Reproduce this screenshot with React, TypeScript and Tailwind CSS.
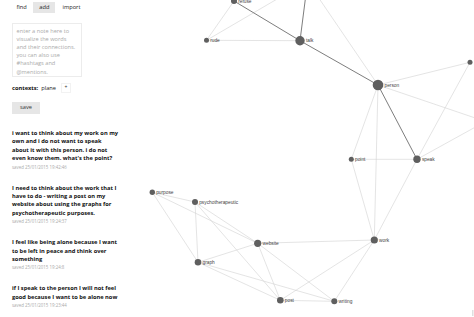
import React from "react";

type N = { id: string; x: number; y: number; r: number; label?: string };

const nodes: N[] = [
  { id: "refuse", x: 234, y: 1, r: 3, label: "refuse" },
  { id: "rude", x: 206.5, y: 40.3, r: 2.5, label: "rude" },
  { id: "talk", x: 300, y: 40.7, r: 4.7, label: "talk" },
  { id: "person", x: 378, y: 85, r: 5.3, label: "person" },
  { id: "n1", x: 470, y: 62.3, r: 2.5 },
  { id: "point", x: 351.3, y: 159.3, r: 2.5, label: "point" },
  { id: "speak", x: 417, y: 159.3, r: 3.7, label: "speak" },
  { id: "work", x: 374.3, y: 240, r: 3.6, label: "work" },
  { id: "website", x: 257.7, y: 243.3, r: 3.6, label: "website" },
  { id: "purpose", x: 152.3, y: 192.3, r: 2.7, label: "purpose" },
  { id: "psycho", x: 195, y: 202, r: 3, label: "psychotherapeutic" },
  { id: "graph", x: 198, y: 262.3, r: 3.3, label: "graph" },
  { id: "post", x: 280.3, y: 300.3, r: 3.3, label: "post" },
  { id: "writing", x: 334.3, y: 301.3, r: 3, label: "writing" },
];

const P: Record<string, [number, number]> = {};
nodes.forEach((n) => (P[n.id] = [n.x, n.y]));
P["offTalk"] = [306.5, -10];
P["offRude"] = [284, -5];
P["offPerson"] = [314, -9];
P["offPersonR"] = [490, 123];
P["offSpeak"] = [490, 119];

const dark: [string, string][] = [
  ["refuse", "talk"],
  ["talk", "offTalk"],
  ["talk", "person"],
  ["person", "speak"],
];

const light: [string, string][] = [
  ["refuse", "rude"],
  ["rude", "offRude"],
  ["rude", "talk"],
  ["person", "offPerson"],
  ["person", "n1"],
  ["person", "offPersonR"],
  ["person", "point"],
  ["person", "work"],
  ["n1", "speak"],
  ["offSpeak", "speak"],
  ["point", "speak"],
  ["point", "work"],
  ["speak", "work"],
  ["work", "website"],
  ["work", "post"],
  ["work", "writing"],
  ["purpose", "psycho"],
  ["purpose", "website"],
  ["purpose", "graph"],
  ["psycho", "website"],
  ["psycho", "graph"],
  ["psycho", "post"],
  ["graph", "website"],
  ["graph", "post"],
  ["graph", "writing"],
  ["website", "post"],
  ["website", "writing"],
  ["post", "writing"],
];

const notes = [
  {
    lines: [
      "i want to think about my work on my",
      "own and i do not want to speak",
      "about it with this person. i do not",
      "even know them. what's the point?",
    ],
    saved: "saved 25/01/2015 19:42:46",
  },
  {
    lines: [
      "I need to think about the work that I",
      "have to do - writing a post on my",
      "website about using the graphs for",
      "psychotherapeutic purposes.",
    ],
    saved: "saved 25/01/2015 19:24:37",
  },
  {
    lines: [
      "I feel like being alone because I want",
      "to be left in peace and think over",
      "something",
    ],
    saved: "saved 25/01/2015 19:24:8",
  },
  {
    lines: [
      "if I speak to the person I will not feel",
      "good because I want to be alone now",
    ],
    saved: "saved 25/01/2015 19:23:44",
  },
];

export default function App() {
  return (
    <div
      className="flex w-[474px] h-[317px] overflow-hidden bg-white text-[#222]"
      style={{ fontFamily: '"Open Sans", "Liberation Sans", sans-serif' }}
    >
      <aside className="w-[130px] shrink-0 pl-[12px] flex flex-col">
        <nav className="flex items-center gap-[1px] mt-[1.5px] -ml-[1px] text-[5.7px] leading-[11px] text-[#222]">
          <span className="px-[5.5px] h-[11px]">find</span>
          <span className="px-[6px] h-[11px] bg-[#e6e6e6]">add</span>
          <span className="px-[6px] h-[11px]">import</span>
        </nav>
        <div className="mt-[10px] w-[70px] h-[54px] border border-[#ececec] pl-[3.5px] pt-[3px] text-[5.65px] leading-[8.2px] text-[#aaa]">
          enter a note here to
          <br />
          visualize the words
          <br />
          and their connections.
          <br />
          you can also use
          <br />
          #hashtags and
          <br />
          @mentions.
        </div>
        <div className="mt-[6px] flex items-center h-[11px] text-[5.7px]">
          <span className="font-bold text-[#111]">contexts:</span>
          <span className="ml-[3px] text-[#222]">plane</span>
          <span className="ml-[5px] w-[10px] h-[10px] flex items-center justify-center border border-[#f2f2f2] text-[#333] text-[5px]">
            +
          </span>
        </div>
        <div className="mt-[8px] w-[28px] h-[12px] bg-[#e6e6e6] flex items-center justify-center text-[5.7px] text-[#333]">
          save
        </div>
        <div className="mt-[15.5px] flex flex-col gap-[13px]">
          {notes.map((n, i) => (
            <div key={i}>
              <div className="font-bold text-[5.72px] leading-[8.4px] text-[#111] whitespace-nowrap">
                {n.lines.map((l, j) => (
                  <div key={j}>{l}</div>
                ))}
              </div>
              <div className="text-[4.4px] leading-[8px] text-[#aaa] whitespace-nowrap">
                {n.saved}
              </div>
            </div>
          ))}
        </div>
      </aside>
      <div className="flex-1 h-[317px]">
        <svg
          width="344"
          height="317"
          viewBox="130 0 344 317"
          style={{ fontFamily: '"Liberation Sans", Arial, sans-serif' }}
        >
          {light.map(([a, b], i) => (
            <line
              key={"l" + i}
              x1={P[a][0]}
              y1={P[a][1]}
              x2={P[b][0]}
              y2={P[b][1]}
              stroke="#d2d2d2"
              strokeWidth={0.6}
            />
          ))}
          {dark.map(([a, b], i) => (
            <line
              key={"d" + i}
              x1={P[a][0]}
              y1={P[a][1]}
              x2={P[b][0]}
              y2={P[b][1]}
              stroke="#6e6e6e"
              strokeWidth={0.9}
            />
          ))}
          {nodes.map((n) => (
            <g key={n.id}>
              <circle cx={n.x} cy={n.y} r={n.r} fill="#5f5f5f" />
              {n.label && (
                <text
                  x={n.x + n.r + 1.2}
                  y={n.y + 1.7}
                  fontSize={4.8}
                  fill="#444"
                >
                  {n.label}
                </text>
              )}
            </g>
          ))}
          <rect x={472} y={310} width={1.5} height={6} fill="#e0e0e0" />
        </svg>
      </div>
    </div>
  );
}
